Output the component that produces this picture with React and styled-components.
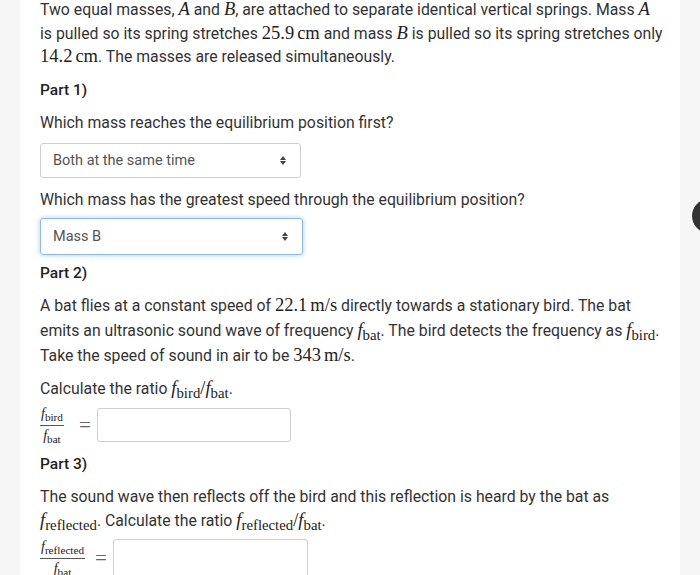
import React from 'react';
import styled, { createGlobalStyle } from 'styled-components';

const GlobalStyle = createGlobalStyle`
    html, body {
        margin: 0;
        padding: 0;
        background: #f6f6f6;
        overflow: hidden;
    }
`

const Page = styled.div`
    position: relative;
    width: 700px;
    height: 575px;
    overflow: hidden;
    display: flex;
    justify-content: center;
    align-items: flex-start;
`

const Panel = styled.div`
    width: 660px;
    min-height: 575px;
    background: #ffffff;
    box-sizing: border-box;
    padding: 0 15px 0 20px;
    display: flex;
    flex-direction: column;
    font-family: Roboto, "Liberation Sans", sans-serif;
    font-size: 15.8px;
    color: #333;
`

const Para = styled.p`
    margin: ${props => props.$top || 0}px 0 0 0;
    line-height: ${props => props.$lh || 24}px;
`

const PartTitle = styled.h4`
    margin: ${props => props.$top || 8}px 0 0 0;
    font-size: 15.5px;
    font-weight: 500;
    line-height: 24px;
    color: #222;
`

const SelectBox = styled.div`
    margin-top: ${props => props.$top || 9}px;
    width: ${props => props.$width}px;
    height: ${props => props.$height}px;
    box-sizing: border-box;
    border: 1px solid ${props => (props.$focused ? '#8cbbe6' : '#cfcfcf')};
    border-radius: 3px;
    box-shadow: ${props => (props.$focused ? '0 0 5px rgba(102, 160, 225, 0.55)' : 'none')};
    display: flex;
    align-items: center;
    justify-content: space-between;
    padding: 0 14px 0 12px;
    font-size: 14.5px;
    color: #555;
`

const Arrows = styled.span`
    display: flex;
    flex-direction: column;
    gap: 1px;
`

const Tri = styled.span`
    width: 0;
    height: 0;
    border-left: 3.5px solid transparent;
    border-right: 3.5px solid transparent;
    ${props => (props.$up ? 'border-bottom: 4px solid #444;' : 'border-top: 4px solid #444;')}
`

const M = styled.span`
    font-family: "Liberation Serif", "DejaVu Serif", serif;
    font-size: 18.5px;
    line-height: 1;
    font-style: ${props => (props.$it ? 'italic' : 'normal')};
    color: #222;
`

const Unit = styled.span`
    margin-left: 3px;
`

const Sub = styled.sub`
    font-family: "Liberation Serif", "DejaVu Serif", serif;
    font-style: normal;
    font-size: 0.8em;
    vertical-align: -0.25em;
    line-height: 0;
`

const FracRow = styled.div`
    margin-top: ${props => props.$top || 3}px;
    display: flex;
    align-items: center;
`

const Frac = styled.span`
    display: inline-flex;
    flex-direction: column;
    align-items: center;
    margin-right: ${props => props.$gap}px;
    font-family: "Liberation Serif", "DejaVu Serif", serif;
    font-size: 14px;
    line-height: 18px;
    color: #222;
`

const Num = styled.span`
    border-bottom: 1px solid #555;
    padding: 0 1px 2px;
    font-style: italic;
`

const Den = styled.span`
    font-style: italic;
    padding-top: 1px;
`

const Eq = styled.span`
    font-family: "Liberation Serif", "DejaVu Serif", serif;
    font-size: 21px;
    color: #666;
    margin: 2px 6px 0 0;
`

const AnswerInput = styled.div`
    width: ${props => props.$width}px;
    height: ${props => props.$height}px;
    box-sizing: border-box;
    border: 1px solid #cfcfcf;
    border-radius: 3px;
    background: #fff;
`

const Bubble = styled.div`
    position: absolute;
    left: 692px;
    top: 199px;
    width: 34px;
    height: 34px;
    border-radius: 50%;
    background: #333;
`

const F = ({ sub }) => (
    <M $it>f<Sub>{sub}</Sub></M>
)

const Select = ({ value, width, height, top, focused }) => (
    <SelectBox $width={width} $height={height} $top={top} $focused={focused}>
        <span>{value}</span>
        <Arrows>
            <Tri $up />
            <Tri />
        </Arrows>
    </SelectBox>
)

const Ratio = ({ top, label, gap, inputWidth, inputHeight }) => (
    <FracRow $top={top}>
        <Frac $gap={gap}>
            <Num>f<Sub>{label}</Sub></Num>
            <Den>f<Sub>bat</Sub></Den>
        </Frac>
        <Eq>=</Eq>
        <AnswerInput $width={inputWidth} $height={inputHeight} />
    </FracRow>
)

export default function App() {
    return (
        <>
            <GlobalStyle />
            <Page>
                <Panel>
                    <Para $top={-2} $lh={23.5}>
                        Two equal masses, <M $it>A</M> and <M $it>B</M>, are attached to separate identical vertical springs. Mass <M $it>A</M> is pulled so its spring stretches <M>25.9<Unit>cm</Unit></M> and mass <M $it>B</M> is pulled so its spring stretches only <M>14.2<Unit>cm</Unit></M>. The masses are released simultaneously.
                    </Para>
                    <PartTitle $top={9}>Part 1)</PartTitle>
                    <Para $top={9}>Which mass reaches the equilibrium position first?</Para>
                    <Select value="Both at the same time" width={261} height={35} top={8} />
                    <Para $top={10}>Which mass has the greatest speed through the equilibrium position?</Para>
                    <Select value="Mass B" width={263} height={37} top={6} focused />
                    <PartTitle $top={6}>Part 2)</PartTitle>
                    <Para $top={8} $lh={25}>
                        A bat flies at a constant speed of <M>22.1<Unit>m/s</Unit></M> directly towards a stationary bird. The bat emits an ultrasonic sound wave of frequency <F sub="bat" />. The bird detects the frequency as <F sub="bird" />. Take the speed of sound in air to be <M>343<Unit>m/s</Unit></M>.
                    </Para>
                    <Para $top={9}>Calculate the ratio <F sub="bird" /><M>/</M><F sub="bat" />.</Para>
                    <Ratio top={4} label="bird" gap={15} inputWidth={194} inputHeight={34} />
                    <PartTitle $top={7}>Part 3)</PartTitle>
                    <Para $top={9}>
                        The sound wave then reflects off the bird and this reflection is heard by the bat as <F sub="reflected" />. Calculate the ratio <F sub="reflected" /><M>/</M><F sub="bat" />.
                    </Para>
                    <Ratio top={5} label="reflected" gap={10} inputWidth={195} inputHeight={38} />
                </Panel>
                <Bubble />
            </Page>
        </>
    )
}
